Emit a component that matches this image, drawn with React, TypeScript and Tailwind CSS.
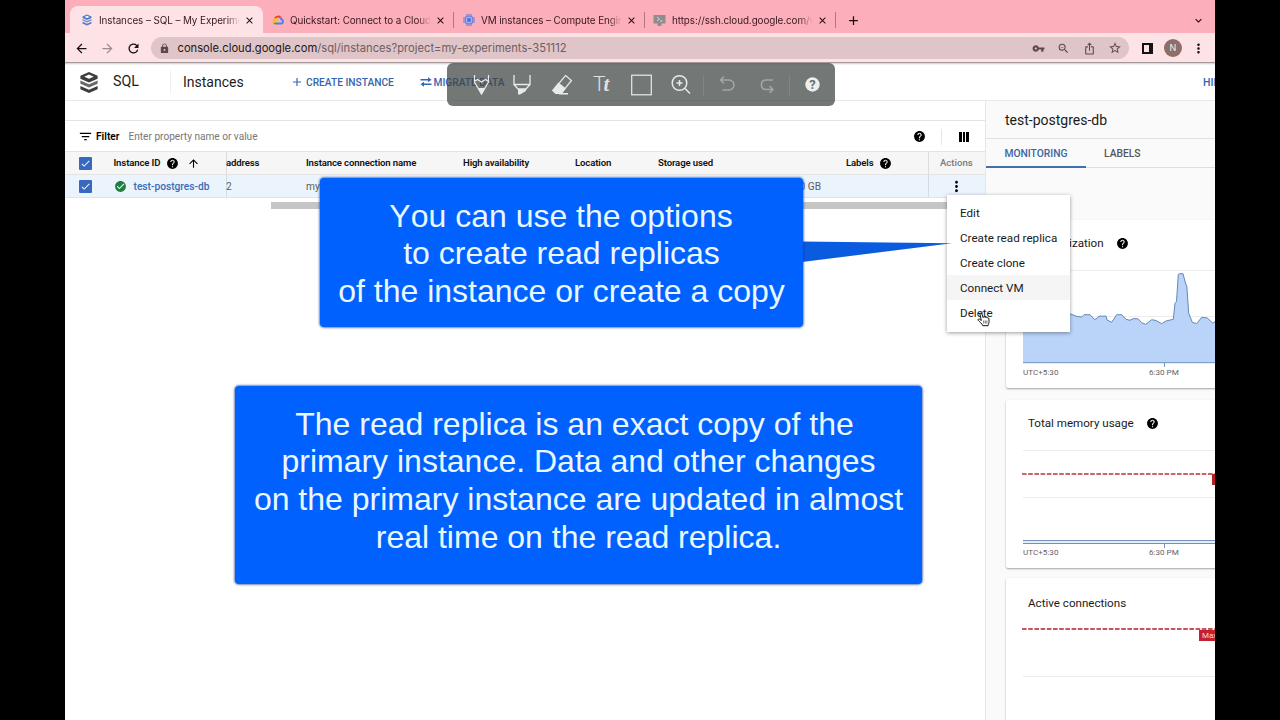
import React from "react";
import {
  MdAdd,
  MdArrowBack,
  MdArrowForward,
  MdArrowUpward,
  MdCheck,
  MdCheckCircle,
  MdClose,
  MdExpandMore,
  MdFilterList,
  MdHelp,
  MdIosShare,
  MdLock,
  MdMoreVert,
  MdRefresh,
  MdStarBorder,
  MdVpnKey,
  MdZoomOut,
} from "react-icons/md";

function SqlIcon({ className, top, side }: { className: string; top: string; side: string }) {
  return (
    <svg viewBox="0 0 20 24" className={className}>
      <path d="M10 1 19 5v3l-9 4-9-4V5z" fill={side} />
      <path d="M10 3.6 15 5.9 10 8.2 5 5.9z" fill="#fff" />
      <path d="M1 9.8l9 4 9-4v3.4l-9 4-9-4z" fill={top} />
      <path d="M1 15.6l9 4 9-4V19l-9 4-9-4z" fill={side} />
    </svg>
  );
}

function CloudIcon() {
  return (
    <svg viewBox="0 0 24 20" className="h-[10px] w-3" fill="none" strokeWidth="4">
      <path d="M6 7a7 7 0 0 1 11-2" stroke="#ea4335" />
      <path d="M17 5a7 7 0 0 1 2 4c4 1 4 8-1 8h-6" stroke="#4285f4" />
      <path d="M12 17H7a5 5 0 0 1-3-1" stroke="#34a853" />
      <path d="M4 16a5 5 0 0 1 3-8c2 0 4 1 5 3" stroke="#fbbc05" />
    </svg>
  );
}

function ChipIcon() {
  return (
    <svg viewBox="0 0 24 24" className="h-3 w-3" fill="none" stroke="#6680dc" strokeWidth="2.2">
      <rect x="4.5" y="4.5" width="15" height="15" rx="5" fill="#a9b4ee" />
      <rect x="9" y="9" width="6" height="6" fill="#4a66d0" />
      <path d="M8 0v4M12 0v4M16 0v4M8 20v4M12 20v4M16 20v4M0 8h4M0 12h4M0 16h4M20 8h4M20 12h4M20 16h4" />
    </svg>
  );
}

function SshIcon() {
  return (
    <svg viewBox="0 0 24 22" className="h-[11px] w-[13px]">
      <path d="M0 0h24v17h-8v5H8v-5H0z" fill="#8f8b8f" />
      <path d="M7 4l5 4-5 4M13 12h5" stroke="#d9d3d6" strokeWidth="2" fill="none" />
    </svg>
  );
}

function SwapIcon() {
  return (
    <svg viewBox="0 0 12 10" className="h-[10px] w-3" fill="none" stroke="#3565ae" strokeWidth="1.5">
      <path d="M0.5 2.7H9.5M2.5 7.3H11.5" />
      <path d="M8 0.2 11.5 2.7 8 5.2zM4 4.8 0.5 7.3 4 9.8z" fill="#3565ae" stroke="none" />
    </svg>
  );
}

function Tab({ icon, title, active }: { icon: React.ReactNode; title: string; active?: boolean }) {
  return (
    <div
      className={
        active
          ? "flex h-[27px] w-[193px] shrink-0 items-center rounded-t-lg bg-[#fee3e6] pl-[10px] pt-px"
          : "flex h-[27px] w-[191px] shrink-0 items-center pl-2 pt-px"
      }
    >
      <span className="flex w-[13px] shrink-0 justify-center">{icon}</span>
      <span className="ml-[6px] w-[142px] shrink-0 overflow-hidden whitespace-nowrap text-[9.9px] tracking-[-0.08px] text-[#36171d] [mask-image:linear-gradient(to_right,black_90%,transparent_99%)]">
        {title}
      </span>
      <MdClose className="ml-[3px] h-[11px] w-[11px] shrink-0 text-[#1d0a0e]" />
      {!active && <span className="ml-[7px] h-4 w-px bg-[#b67580]" />}
    </div>
  );
}

function Browser() {
  return (
    <div className="flex h-[63px] shrink-0 flex-col border-b border-[#a2999b] bg-[#fee3e6] font-[Inter,sans-serif]">
      <div className="flex h-[33px] items-end bg-[#fdaebb] pl-[5px]">
        <Tab active icon={<SqlIcon className="h-3 w-[10px]" top="#6b8fd8" side="#4f78c8" />} title="Instances – SQL – My Experiments" />
        <Tab icon={<CloudIcon />} title="Quickstart: Connect to a Cloud SQL" />
        <Tab icon={<ChipIcon />} title="VM instances – Compute Engine" />
        <Tab icon={<SshIcon />} title="https://ssh.cloud.google.com/v2" />
        <div className="flex h-[27px] flex-1 items-center justify-between pl-[10px] pr-[10px] pt-px">
          <MdAdd className="h-[15px] w-[15px] text-[#1d0a0e]" />
          <MdExpandMore className="h-[13px] w-[13px] text-[#1d0a0e]" />
        </div>
      </div>
      <div className="flex h-[29px] items-center pt-px">
        <div className="flex w-[86px] items-center gap-[11px] pl-[9px]">
          <MdArrowBack className="h-[15px] w-[15px] text-[#191012]" />
          <MdArrowForward className="h-[15px] w-[15px] text-[#a08a8e]" />
          <MdRefresh className="h-[15px] w-[15px] text-[#191012]" />
        </div>
        <div className="flex h-[22px] w-[978px] items-center rounded-full bg-[#dfc4c8] pl-2 pr-[7px]">
          <MdLock className="h-[11px] w-[11px] text-[#5a4a4d]" />
          <span className="ml-[7.5px] flex-1 whitespace-nowrap text-[11.2px] text-[#705d61]">
            <span className="text-[#221618]">console.cloud.google.com</span>/sql/instances?project=my-experiments-351112
          </span>
          <div className="flex items-center gap-[12.5px] text-[#5c4a4e]">
            <MdVpnKey className="h-[13px] w-[13px]" />
            <MdZoomOut className="h-[13px] w-[13px]" />
            <MdIosShare className="h-[13px] w-[13px]" />
            <MdStarBorder className="h-[14px] w-[14px]" />
          </div>
        </div>
        <div className="flex items-center pl-[13px]">
          <span className="h-[11px] w-[11px] border-2 border-r-4 border-[#191012]" />
          <span className="ml-[11px] flex h-[18px] w-[18px] items-center justify-center rounded-full bg-[#8d6e69] text-[9px] text-[#fbe9ea]">N</span>
          <MdMoreVert className="ml-[9px] h-[15px] w-[15px] text-[#191012]" />
        </div>
      </div>
    </div>
  );
}

function Header() {
  return (
    <div className="flex h-[38px] shrink-0 items-center border-b border-[#e8e8e8] bg-white pt-px text-[14px] text-[#1c1c1c] shadow-[inset_0_2px_2px_-1px_rgba(0,0,0,0.2)]">
      <SqlIcon className="ml-[14px] h-[23px] w-5" top="#6a6a6a" side="#3d3d3d" />
      <span className="ml-[14px] w-[57px] text-[14.3px]">SQL</span>
      <span className="h-[24px] w-px shrink-0 bg-[#f0f0f0]" />
      <span className="ml-[12px] w-[108px] shrink-0">Instances</span>
      <div className="flex w-[128.5px] shrink-0 items-center text-[10.2px] font-medium text-[#3565ae]">
        <MdAdd className="ml-[-1px] h-[14px] w-[14px]" />
        <span className="ml-[2px] whitespace-nowrap pt-px">CREATE INSTANCE</span>
      </div>
      <div className="flex flex-1 items-center text-[10.2px] font-medium text-[#3565ae]">
        <SwapIcon />
        <span className="ml-[2px] whitespace-nowrap pt-px">MIGRATE DATA</span>
      </div>
      <span className="w-3 overflow-hidden whitespace-nowrap pt-px text-[10.5px] font-medium text-[#3565ae]">HIDE</span>
    </div>
  );
}

function Checkbox() {
  return (
    <span className="flex h-[13px] w-[13px] items-center justify-center rounded-[1px] bg-[#3868c0]">
      <MdCheck className="h-[11px] w-[11px] text-white" />
    </span>
  );
}

const columns = "grid grid-cols-[34px_113px_80px_157px_112px_83px_188px_82px_57px] items-center pl-[14px]";

function InstanceTable() {
  return (
    <div className="w-[921px] shrink-0 border-r border-[#e6e6e6] bg-white text-[10.2px]">
      <div className="h-[20px] border-b border-[#e4e4e4]" />
      <div className="flex h-[30px] items-center pt-px">
        <MdFilterList className="ml-[13px] h-[15px] w-[15px] text-black" />
        <span className="ml-[3px] w-[32.5px] font-semibold text-black">Filter</span>
        <span className="flex-1 text-[10.1px] text-[#777]">Enter property name or value</span>
        <MdHelp className="h-[13px] w-[13px] text-black" />
        <span className="ml-[15px] h-4 w-px bg-[#e8e8e8]" />
        <span className="ml-[17px] mr-[16px] flex h-[10px] w-[10px] gap-[1px]">
          <span className="flex-1 bg-black" />
          <span className="flex-1 bg-black" />
          <span className="flex-1 bg-black" />
        </span>
      </div>
      <div className={columns + " h-[24px] whitespace-nowrap border-y border-[#e4e4e4] bg-[#f6f6f6] text-[9.6px] font-semibold tracking-[-0.14px] text-[#111]"}>
        <Checkbox />
        <span className="-mr-px flex h-full items-center border-r border-[#dcdcdc] pl-[0.5px] pt-px">
          Instance ID
          <MdHelp className="ml-[5.5px] h-[13px] w-[13px] text-black" />
          <MdArrowUpward className="ml-[8px] h-[13px] w-[13px] text-black" />
        </span>
        <span className="pt-px">address</span>
        <span className="pt-px">Instance connection name</span>
        <span className="pt-px">High availability</span>
        <span className="pt-px">Location</span>
        <span className="pt-px">Storage used</span>
        <span className="-mr-px flex h-full items-center border-r border-[#dcdcdc] pt-px">
          Labels
          <MdHelp className="ml-[6px] h-[13px] w-[13px] text-black" />
        </span>
        <span className="pl-[12px] pt-px font-medium tracking-normal text-[#7a7a7a]">Actions</span>
      </div>
      <div className={columns + " h-[23px] whitespace-nowrap border-b border-[#e0e4ea] bg-[#ebf3fd] text-[#5c5c5c]"}>
        <Checkbox />
        <span className="-mr-px flex h-full items-center border-r border-[#d3dbe6] font-medium text-[#3a6bb8]">
          <MdCheckCircle className="ml-[1px] mr-[6.5px] h-[13px] w-[13px] text-[#1e7f3b]" />
          <span className="pt-px">test-postgres-db</span>
        </span>
        <span className="pt-px">2</span>
        <span className="pt-px">my-experiments-351112</span>
        <span />
        <span />
        <span className="w-[163px] pt-px text-right">10 GB</span>
        <span className="-mr-px h-full border-r border-[#d3dbe6]" />
        <span className="flex justify-center">
          <MdMoreVert className="h-[17px] w-[17px] text-black" />
        </span>
      </div>
      <div className="ml-[206px] mt-[4px] h-[7px] bg-[#c5c5c5]" />
    </div>
  );
}

function AxisLabels() {
  return (
    <div className="-mt-[2px] ml-[17px] flex h-3 w-[300px] items-center whitespace-nowrap text-[8.1px] text-[#5f5f5f]">
      <span className="w-[126px]">UTC+5:30</span>
      <span>6:30 PM</span>
    </div>
  );
}

const cardClass = "w-[230px] rounded-[2px] bg-white shadow-[0_1px_2px_rgba(0,0,0,0.35)]";

const cpuLine =
  "M0 48C14 43 30 47 40 44L47.7 45 54 47.5 58.7 48 61 45.7H67L71.3 50.3 73 50 76 47.3 83 47 84 51 88.7 53.3 93.7 45.7H98.7L103 50.3 107 51.3 110 49.7H115L118.7 53.7 122.7 55.3 128.7 50.7 133 51.5 138.7 54.7 143 52 150.3 50.3 152 34.3 153.5 32.5 155.3 5.3 156.5 4.7H160L162.7 15 163.8 17 165.7 44.3 169.3 53.3 173.7 54.7 178.7 48.3 184.3 49 189.7 54 192 52.7";

function CpuCard() {
  return (
    <div className={cardClass + " h-[168px] pt-[15px]"}>
      <div className="flex h-4 items-center pl-[22px] text-[11.6px] text-[#1a1a1a]">
        <span className="w-[87.5px] whitespace-nowrap pt-px">CPU utilization</span>
        <MdHelp className="h-[13px] w-[13px] text-black" />
      </div>
      <svg viewBox="0 0 192 99" className="ml-[17px] mt-[18px] block h-[99px] w-[192px]">
        <path d="M0 1.5H192M0 47.5H192" stroke="#ececec" />
        <path d={cpuLine + "V94H0Z"} fill="#bad3f8" />
        <path d={cpuLine} fill="none" stroke="#6289b8" />
        <path d="M0 93.7H192M141.5 94v4" stroke="#7393ba" />
      </svg>
      <AxisLabels />
    </div>
  );
}

function MemoryCard() {
  return (
    <div className={cardClass + " mt-[12px] h-[168px] pt-[15px]"}>
      <div className="flex h-4 items-center pl-[22px] text-[11.6px] text-[#1a1a1a]">
        <span className="w-[117.5px] whitespace-nowrap pt-px">Total memory usage</span>
        <MdHelp className="h-[13px] w-[13px] text-black" />
      </div>
      <svg viewBox="0 0 193 99" className="ml-4 mt-[18px] block h-[99px] w-[193px]">
        <path d="M1 1.5H193M1 48.5H193" stroke="#ececec" />
        <path d="M0 25H193" stroke="#b8323a" strokeWidth="1.6" strokeDasharray="4.6 1.6" />
        <rect x="190" y="25" width="3" height="11" fill="#b81d29" />
        <path d="M1 93h192" stroke="#e3edfb" strokeWidth="4" />
        <path d="M1 91.5H193M1 94.5H193M142.5 95v4" stroke="#7393ba" />
      </svg>
      <AxisLabels />
    </div>
  );
}

function ConnectionsCard() {
  return (
    <div className={cardClass + " mt-[10px] h-[170px] pt-[17px]"}>
      <div className="flex h-4 items-center pl-[22px] pt-px text-[11.6px] text-[#1a1a1a]">Active connections</div>
      <svg viewBox="0 0 193 2" className="ml-4 mt-[17px] block h-[2px] w-[193px]">
        <path d="M0 1H193" stroke="#b01f2e" strokeWidth="1.6" strokeDasharray="4.6 1.6" />
      </svg>
      <div className="ml-[193px] flex h-[11px] items-center bg-[#c5202e] pl-[3px] text-[8px] text-[#fbd7da]">Max</div>
      <div className="ml-[17px] mt-[35px] h-px bg-[#ececec]" />
    </div>
  );
}

function DetailsPanel() {
  return (
    <div className="flex min-w-0 flex-1 flex-col overflow-hidden bg-[#fafafa]">
      <div className="flex h-[38px] shrink-0 items-center border-b border-[#e2e2e2] pl-[19px] pt-px text-[14px] text-[#1a1a1a]">test-postgres-db</div>
      <div className="flex h-[29px] shrink-0 border-b border-[#dedede] text-[10.3px] font-medium">
        <span className="-mb-px flex w-[100px] items-center justify-center border-b-2 border-[#426fae] pt-[2px] text-[#3b659f]">MONITORING</span>
        <span className="flex items-center pl-[18px] pt-px text-[#555]">LABELS</span>
      </div>
      <div className="ml-[20px] mt-[52px]">
        <CpuCard />
        <MemoryCard />
        <ConnectionsCard />
      </div>
    </div>
  );
}

function ActionsMenu() {
  const items = ["Edit", "Create read replica", "Create clone", "Connect VM", "Delete"];
  return (
    <div className="absolute left-[882px] top-[195px] h-[137px] w-[123px] bg-white pt-[5px] text-[11.65px] text-[#1a1a1a] shadow-[0_1px_4px_rgba(0,0,0,0.4)]">
      {items.map((item) => (
        <div
          key={item}
          className={
            item === "Connect VM"
              ? "flex h-[25px] items-center whitespace-nowrap bg-[#f5f5f5] pl-[13px] pt-[2px]"
              : "flex h-[25px] items-center whitespace-nowrap pl-[13px] pt-[2px]"
          }
        >
          {item}
        </div>
      ))}
    </div>
  );
}

function HandCursor() {
  return (
    <svg viewBox="0 0 14 16" className="absolute left-[912px] top-[311px] h-4 w-[14px]">
      <path
        d="M4.3 9.5 3 3.2C2.8 2 4.4 1.6 4.8 2.8l1.3 3.7c.2-1.1 1.7-1.2 2 0 .5-.8 1.7-.6 1.9.4.7-.6 1.7-.2 1.8.7l.3 3.1c0 1.4-.8 2-1 4H5.8C5.3 12.7 2 10.5 1.2 9.3.6 8.2 1.8 7.5 2.7 8.2z"
        fill="#fff"
        stroke="#111"
      />
      <path d="M6.7 9.5v3M8.3 9.5v3M9.9 9.5v3" stroke="#333" strokeWidth="0.7" />
    </svg>
  );
}

function AnnotationBar() {
  return (
    <div className="absolute left-[382px] top-[63px] h-[43px] w-[388px] rounded-[6px] bg-[#3d4341]/72">
      <svg viewBox="0 0 388 43" className="block h-[43px] w-[388px]" fill="none" stroke="#e8ebea" strokeWidth="1.5">
        <path d="M27.5 12v7l7 12 7-12v-7M27.5 18.5l3-2 4 2.5 4-2.5 3 2" strokeWidth="1.2" />
        <path d="M31.500 25.500h6l-3 5.500z" fill="#e8ebea" strokeWidth="1" />
        <path d="M67 12v9.500h16V12M67 21.500l4 4.500h8l4-4.500" strokeWidth="1.3" />
        <path d="M71 26h8v2l-6 3.500h-2z" fill="#e8ebea" stroke="none" />
        <path d="M118.500 12.500l6 5-10.500 13h-4.500l-3.500-3z" strokeWidth="1.2" />
        <path d="M111.500 19.500l7.500 6-4.500 5.500h-6l-3.500-3.500zM112 30h9v1.500h-9z" fill="#e8ebea" stroke="none" />
        <rect x="184.700" y="12.200" width="19.600" height="19.600" strokeWidth="1.2" />
        <circle cx="232.500" cy="20" r="7.300" />
        <path d="M238 25.500l5 5M229.500 20h6M232.500 17v6" />
        <g stroke="#a3a7a6">
          <path d="M277 13.500l-3.500 3.500 3.500 3.500M274 17h8a5 5 0 0 1 0 10h-6.500" />
          <path d="M326 17h-7.500a4.800 4.800 0 0 0 0 9.500h7M322.500 23l3.500 3.500-3.500 3.500" />
        </g>
        <path d="M256.500 12v21M342.500 12v21" stroke="#828584" strokeWidth="1" />
        <circle cx="365.500" cy="21.500" r="7.200" fill="#eef0ef" stroke="none" />
      </svg>
      <span className="absolute left-[146px] top-[8px] flex text-[21px] font-light leading-[26px] text-[#dfe2e1]">
        T<i className="-ml-[2px] font-['Liberation_Serif',serif] font-bold">t</i>
      </span>
      <span className="absolute left-[361.5px] top-[15px] w-2 text-center text-[13px] font-bold leading-[14px] text-[#6c6f6e]">?</span>
    </div>
  );
}

function Callouts() {
  return (
    <div className="font-['Liberation_Sans',Arial,sans-serif] text-[32px] leading-[37.7px] text-[#e9f8ff] [font-kerning:none]">
      <svg viewBox="0 0 150 24" className="absolute left-[737px] top-[240px] h-6 w-[150px]">
        <path d="M0 1.5L150 3.3 0 22z" fill="#0b5be0" />
      </svg>
      <div className="absolute left-[255px] top-[178px] flex h-[149px] w-[483px] flex-col items-center whitespace-pre rounded-[4px] bg-[#0061fe] pt-[19.5px] shadow-[0_0_2px_1px_rgba(20,60,130,0.6)]">
        <span className="pr-px">You can use the options</span>
        <span>to create read replicas</span>
        <span>of the instance or create a copy</span>
      </div>
      <div className="absolute left-[170px] top-[386px] flex h-[198px] w-[687px] flex-col items-center whitespace-pre rounded-[4px] bg-[#0061fe] pt-[19.5px] shadow-[0_0_2px_1px_rgba(20,60,130,0.6)]">
        <span className="pr-[8px]">The read replica is an exact copy of the</span>
        <span>primary instance. Data and other changes</span>
        <span>on the primary instance are updated in almost</span>
        <span>real time on the read replica.</span>
      </div>
    </div>
  );
}

export default function App() {
  return (
    <div className="flex h-[720px] w-[1280px] justify-center overflow-hidden bg-black">
      <div className="relative flex h-[720px] w-[1150px] flex-col overflow-hidden bg-white font-[Roboto,sans-serif]">
        <Browser />
        <Header />
        <div className="flex min-h-0 flex-1">
          <InstanceTable />
          <DetailsPanel />
        </div>
        <AnnotationBar />
        <ActionsMenu />
        <Callouts />
        <HandCursor />
      </div>
    </div>
  );
}
